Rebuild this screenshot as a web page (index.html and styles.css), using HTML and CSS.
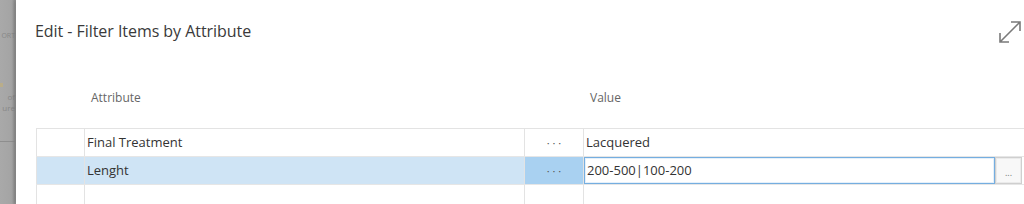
FILE: index.html
```html
<!DOCTYPE html>
<html>
<head>
<meta charset="utf-8">
<link rel="stylesheet" href="styles.css">
</head>
<body>
<div class="page">
  <div class="backdrop">
    <div class="bd-text bd-top">ORT</div>
    <div class="bd-dot"></div>
    <div class="bd-text bd-of">of</div>
    <div class="bd-text bd-ure">ure</div>
    <div class="bd-line"></div>
  </div>
  <div class="dialog">
    <div class="title-row">
      <h1 class="title">Edit - Filter Items by Attribute</h1>
      <svg class="expand" width="24" height="24" viewBox="0 0 24 24">
        <path d="M2 22 L22 2 M13 2 H22 V11 M2 13 V22 H11" fill="none" stroke="#7a7a7a" stroke-width="1.6"/>
      </svg>
    </div>
    <div class="grid head">
      <div></div>
      <div class="hcell">Attribute</div>
      <div></div>
      <div class="hcell">Value</div>
    </div>
    <div class="table">
      <div class="grid row">
        <div class="cell"></div>
        <div class="cell">Final Treatment</div>
        <div class="cell dots">· · ·</div>
        <div class="cell">Lacquered</div>
      </div>
      <div class="grid row selected">
        <div class="cell"></div>
        <div class="cell">Lenght</div>
        <div class="cell dots active">· · ·</div>
        <div class="cell edit">
          <div class="input">200-500|100-200</div>
          <div class="lookup">...</div>
        </div>
      </div>
      <div class="grid row">
        <div class="cell"></div>
        <div class="cell"></div>
        <div class="cell"></div>
        <div class="cell"></div>
      </div>
    </div>
  </div>
</div>
</body>
</html>
```
FILE: styles.css
```css
html, body {
  margin: 0;
  padding: 0;
  background: #ffffff;
  overflow: hidden;
}
body {
  font-family: "Open Sans", "Noto Sans", sans-serif;
  color: #333333;
}
.page {
  display: flex;
  height: 204px;
  width: 1024px;
}
.backdrop {
  width: 16px;
  flex: none;
  background: linear-gradient(to right, #a9a9a9 0, #a4a4a4 12px, #8f8f8f 15px, #9a9a9a 16px);
  position: relative;
  overflow: hidden;
}
.bd-text {
  position: absolute;
  right: 1px;
  font-size: 8px;
  line-height: 10px;
  color: #878787;
  text-align: right;
  white-space: nowrap;
}
.bd-top { top: 31px; font-size: 7px; }
.bd-of { top: 92px; }
.bd-ure { top: 103px; }
.bd-dot {
  position: absolute;
  left: 0;
  top: 83px;
  width: 3px;
  height: 4px;
  background: #b9ad8a;
}
.bd-line {
  position: absolute;
  left: 0;
  right: 1px;
  top: 141px;
  height: 1px;
  background: #8e8e8e;
}
.dialog {
  flex: 1;
  background: #ffffff;
  box-shadow: -2px 0 4px rgba(0,0,0,0.15);
  padding-left: 20px;
  position: relative;
}
.title-row {
  display: flex;
  justify-content: space-between;
  align-items: flex-start;
  height: 82px;
}
.title {
  margin: 19px 0 0 -1px;
  font-size: 16px;
  font-weight: 400;
  line-height: 24px;
  color: #3a3a3a;
  letter-spacing: -0.05px;
}
.expand {
  margin-top: 20px;
  margin-right: 2px;
}
.grid {
  display: grid;
  grid-template-columns: 48px 440px 59px 1fr;
}
.head {
  height: 46px;
}
.hcell {
  font-size: 12px;
  color: #666666;
  padding-left: 7px;
  padding-top: 7px;
  line-height: 17px;
}
.table {
  border-top: 1px solid #e3e3e3;
}
.row {
  height: 27px;
  border-bottom: 1px solid #e6e6e6;
}
.cell {
  border-left: 1px solid #e3e3e3;
  font-size: 13px;
  line-height: 27px;
  padding-left: 2px;
  color: #333333;
  white-space: nowrap;
}
.dots {
  text-align: center;
  color: #555555;
  font-size: 11px;
  padding-left: 0;
}
.selected .cell:nth-child(-n+2) {
  background: #cfe4f5;
}
.selected .dots.active {
  background: #a9d1f1;
}
.selected .cell.edit {
  display: flex;
  padding: 0;
  background: #ffffff;
}
.input {
  width: 407px;
  height: 25px;
  border: 1px solid #75aee0;
  box-shadow: inset 0 0 0 1px #e5f0fa;
  line-height: 25px;
  padding-left: 2px;
  font-size: 13px;
  color: #333333;
}
.lookup {
  width: 25px;
  height: 25px;
  border: 1px solid #cfcfcf;
  box-shadow: inset 0 0 0 1px #ebebeb;
  background: #f8f8f8;
  color: #777777;
  font-size: 9px;
  line-height: 30px;
  text-align: center;
}
```
